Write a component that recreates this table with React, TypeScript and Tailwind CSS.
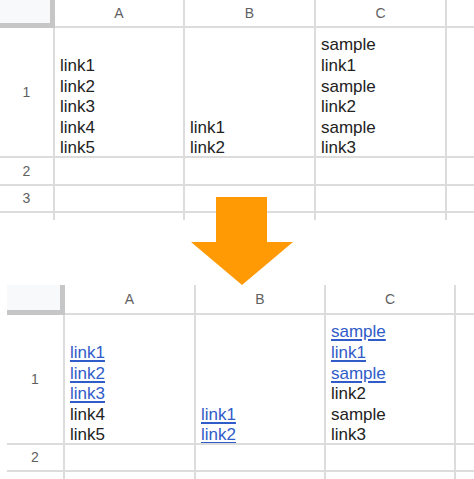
import type { ReactNode } from "react";

type Line = { text: string; link?: boolean };

const font = { fontFamily: '"Liberation Sans", Arial, sans-serif' };

function CellText({ lines }: { lines: Line[] }) {
  return (
    <div className="flex h-full translate-y-[3px] flex-col justify-end pl-[5px] text-[17px] leading-[20.6px] text-[#222]">
      {lines.map((l, i) =>
        l.link ? (
          <span key={i} className="text-[#2f5cc9] underline decoration-[1.5px] underline-offset-2">
            {l.text}
          </span>
        ) : (
          <span key={i}>{l.text}</span>
        )
      )}
    </div>
  );
}

function Cell({ children, last }: { children?: ReactNode; last?: boolean }) {
  return (
    <div className={`overflow-hidden border-r-2 border-[#dcdcdc] ${last ? "" : "border-b-2"}`}>
      {children}
    </div>
  );
}

function Head({ label }: { label: string }) {
  return (
    <div className="flex items-center justify-center border-r-2 border-b-2 border-[#dcdcdc] text-[14px] text-[#5f5f5f]">
      {label}
    </div>
  );
}

function Sheet({
  cols,
  rows,
  rowOne,
  extra,
}: {
  cols: string;
  rows: string;
  rowOne: Line[][];
  extra: string[];
}) {
  return (
    <div className={`grid ${cols} ${rows}`}>
      <div className="border-r-[5px] border-b-[5px] border-[#c6c6c6] bg-[#f8f9fa]" />
      <Head label="A" />
      <Head label="B" />
      <Head label="C" />
      <div className="border-b-2 border-[#dcdcdc]" />

      <Head label="1" />
      {rowOne.map((lines, i) => (
        <Cell key={i}>
          <CellText lines={lines} />
        </Cell>
      ))}
      <div className="border-b-2 border-[#dcdcdc]" />

      {extra.map((n) => (
        <div key={n} className="contents">
          <Head label={n} />
          <Cell />
          <Cell />
          <Cell />
          <div className="border-b-2 border-[#dcdcdc]" />
        </div>
      ))}

      <Cell last />
      <Cell last />
      <Cell last />
      <Cell last />
      <div />
    </div>
  );
}

const plain = (...t: string[]): Line[] => t.map((text) => ({ text }));

export default function App() {
  return (
    <div className="relative h-[479px] w-[474px] overflow-hidden bg-white" style={font}>
      <div className="h-[220px] overflow-hidden">
        <Sheet
          cols="grid-cols-[55px_130px_131px_131px_1fr]"
          rows="grid-rows-[28px_130px_28px_27px_7px]"
          extra={["2", "3"]}
          rowOne={[
            plain("link1", "link2", "link3", "link4", "link5"),
            plain("link1", "link2"),
            plain("sample", "link1", "sample", "link2", "sample", "link3"),
          ]}
        />
      </div>

      <div className="mt-[65px] ml-[7px] h-[194px] overflow-hidden">
        <Sheet
          cols="grid-cols-[58px_131px_130px_130px_1fr]"
          rows="grid-rows-[30px_130px_27px_7px]"
          extra={["2"]}
          rowOne={[
            [
              { text: "link1", link: true },
              { text: "link2", link: true },
              { text: "link3", link: true },
              { text: "link4" },
              { text: "link5" },
            ],
            [
              { text: "link1", link: true },
              { text: "link2", link: true },
            ],
            [
              { text: "sample", link: true },
              { text: "link1", link: true },
              { text: "sample", link: true },
              { text: "link2" },
              { text: "sample" },
              { text: "link3" },
            ],
          ]}
        />
      </div>

      <svg
        className="absolute left-[191px] top-[197px]"
        width="102"
        height="88"
        viewBox="0 0 102 88"
      >
        <polygon points="25,0 76,0 76,45 102,45 51,88 0,45 25,45" fill="#ff9a05" />
      </svg>
    </div>
  );
}
